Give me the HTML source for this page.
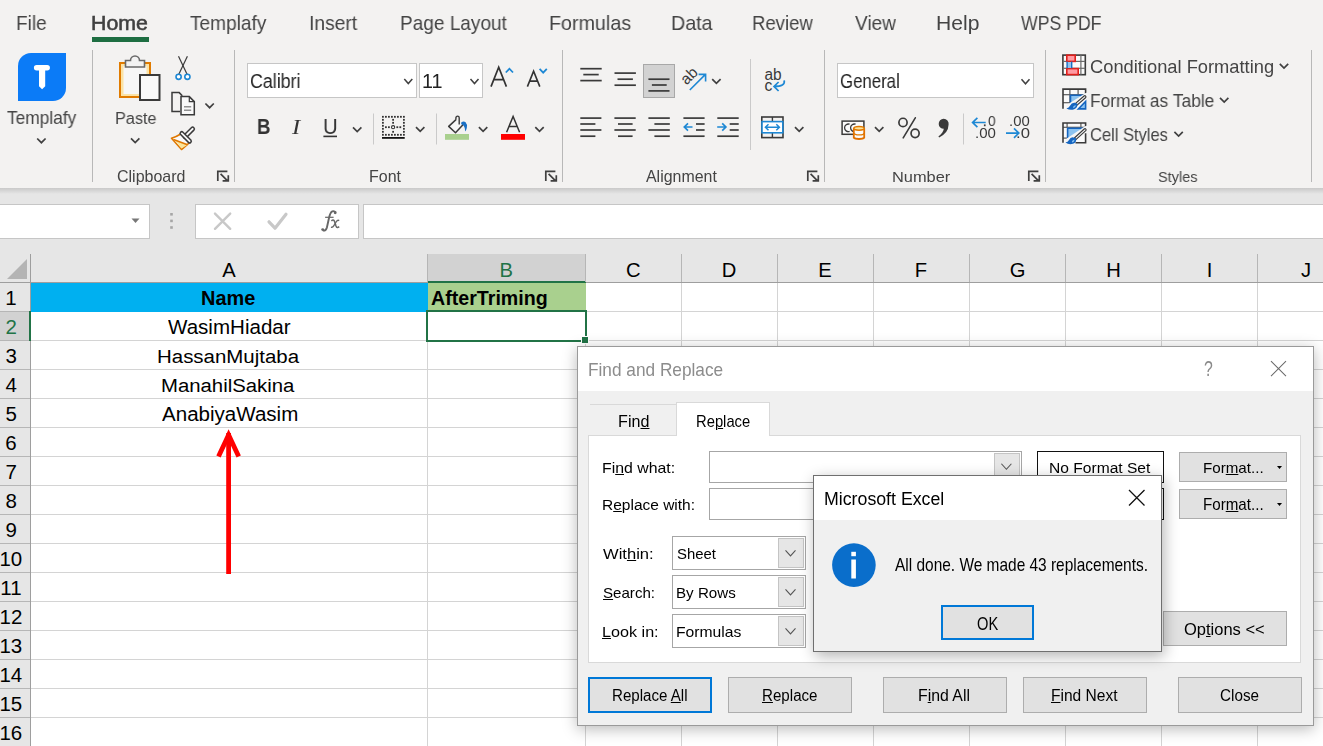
<!DOCTYPE html>
<html><head><meta charset="utf-8"><style>
html,body{margin:0;padding:0}
body{width:1323px;height:746px;overflow:hidden;position:relative;background:#e6e6e6;font-family:"Liberation Sans",sans-serif}
.t{position:absolute;line-height:1;white-space:pre;transform-origin:0 0}
.g{will-change:transform}
.t u{text-decoration:underline;text-decoration-thickness:1px;text-underline-offset:1px}
svg.L{position:absolute;left:0;top:0;width:1323px;height:746px;overflow:visible}
</style></head><body>
<div style="position:absolute;left:0px;top:0px;width:1323px;height:188px;background:#f3f2f1"></div><div style="position:absolute;left:92px;top:37px;width:57px;height:5px;background:#1e6e42"></div><div style="position:absolute;left:0px;top:188px;width:1323px;height:6px;background:linear-gradient(#c9c9c9,#e6e6e6)"></div><div style="position:absolute;left:92px;top:50px;width:1px;height:132px;background:#b8b8b8"></div><div style="position:absolute;left:234px;top:50px;width:1px;height:132px;background:#b8b8b8"></div><div style="position:absolute;left:562px;top:50px;width:1px;height:132px;background:#b8b8b8"></div><div style="position:absolute;left:824px;top:50px;width:1px;height:132px;background:#b8b8b8"></div><div style="position:absolute;left:1045px;top:50px;width:1px;height:132px;background:#b8b8b8"></div><div style="position:absolute;left:1311px;top:50px;width:1px;height:132px;background:#b8b8b8"></div><div style="position:absolute;left:0px;top:204px;width:150px;height:35px;background:#fff;border:1px solid #c6c6c6;border-left:none;box-sizing:border-box"></div><div style="position:absolute;left:195px;top:204px;width:164px;height:35px;background:#fff;border:1px solid #c6c6c6;box-sizing:border-box"></div><div style="position:absolute;left:363px;top:204px;width:960px;height:35px;background:#fff;border:1px solid #c6c6c6;border-right:none;box-sizing:border-box"></div><div style="position:absolute;left:31px;top:283px;width:1292px;height:463px;background:#fff"></div><div style="position:absolute;left:31px;top:311px;width:1292px;height:1px;background:#d4d4d4"></div><div style="position:absolute;left:31px;top:340px;width:1292px;height:1px;background:#d4d4d4"></div><div style="position:absolute;left:31px;top:369px;width:1292px;height:1px;background:#d4d4d4"></div><div style="position:absolute;left:31px;top:398px;width:1292px;height:1px;background:#d4d4d4"></div><div style="position:absolute;left:31px;top:427px;width:1292px;height:1px;background:#d4d4d4"></div><div style="position:absolute;left:31px;top:456px;width:1292px;height:1px;background:#d4d4d4"></div><div style="position:absolute;left:31px;top:485px;width:1292px;height:1px;background:#d4d4d4"></div><div style="position:absolute;left:31px;top:514px;width:1292px;height:1px;background:#d4d4d4"></div><div style="position:absolute;left:31px;top:543px;width:1292px;height:1px;background:#d4d4d4"></div><div style="position:absolute;left:31px;top:572px;width:1292px;height:1px;background:#d4d4d4"></div><div style="position:absolute;left:31px;top:601px;width:1292px;height:1px;background:#d4d4d4"></div><div style="position:absolute;left:31px;top:630px;width:1292px;height:1px;background:#d4d4d4"></div><div style="position:absolute;left:31px;top:659px;width:1292px;height:1px;background:#d4d4d4"></div><div style="position:absolute;left:31px;top:688px;width:1292px;height:1px;background:#d4d4d4"></div><div style="position:absolute;left:31px;top:717px;width:1292px;height:1px;background:#d4d4d4"></div><div style="position:absolute;left:31px;top:746px;width:1292px;height:1px;background:#d4d4d4"></div><div style="position:absolute;left:427px;top:283px;width:1px;height:463px;background:#d4d4d4"></div><div style="position:absolute;left:585px;top:283px;width:1px;height:463px;background:#d4d4d4"></div><div style="position:absolute;left:681px;top:283px;width:1px;height:463px;background:#d4d4d4"></div><div style="position:absolute;left:777px;top:283px;width:1px;height:463px;background:#d4d4d4"></div><div style="position:absolute;left:873px;top:283px;width:1px;height:463px;background:#d4d4d4"></div><div style="position:absolute;left:969px;top:283px;width:1px;height:463px;background:#d4d4d4"></div><div style="position:absolute;left:1065px;top:283px;width:1px;height:463px;background:#d4d4d4"></div><div style="position:absolute;left:1161px;top:283px;width:1px;height:463px;background:#d4d4d4"></div><div style="position:absolute;left:1257px;top:283px;width:1px;height:463px;background:#d4d4d4"></div><div style="position:absolute;left:428px;top:254px;width:157px;height:28px;background:#d2d2d2"></div><div style="position:absolute;left:0px;top:282px;width:1323px;height:1px;background:#9e9e9e"></div><div style="position:absolute;left:428px;top:281px;width:158px;height:2px;background:#217346"></div><div style="position:absolute;left:30px;top:254px;width:1px;height:28px;background:#b6b6b6"></div><div style="position:absolute;left:427px;top:254px;width:1px;height:28px;background:#b6b6b6"></div><div style="position:absolute;left:585px;top:254px;width:1px;height:28px;background:#b6b6b6"></div><div style="position:absolute;left:681px;top:254px;width:1px;height:28px;background:#b6b6b6"></div><div style="position:absolute;left:777px;top:254px;width:1px;height:28px;background:#b6b6b6"></div><div style="position:absolute;left:873px;top:254px;width:1px;height:28px;background:#b6b6b6"></div><div style="position:absolute;left:969px;top:254px;width:1px;height:28px;background:#b6b6b6"></div><div style="position:absolute;left:1065px;top:254px;width:1px;height:28px;background:#b6b6b6"></div><div style="position:absolute;left:1161px;top:254px;width:1px;height:28px;background:#b6b6b6"></div><div style="position:absolute;left:1257px;top:254px;width:1px;height:28px;background:#b6b6b6"></div><div style="position:absolute;left:30px;top:254px;width:1px;height:492px;background:#9e9e9e"></div><div style="position:absolute;left:0px;top:312px;width:29px;height:28px;background:#d2d2d2"></div><div style="position:absolute;left:0px;top:311px;width:30px;height:1px;background:#b6b6b6"></div><div style="position:absolute;left:0px;top:340px;width:30px;height:1px;background:#b6b6b6"></div><div style="position:absolute;left:0px;top:369px;width:30px;height:1px;background:#b6b6b6"></div><div style="position:absolute;left:0px;top:398px;width:30px;height:1px;background:#b6b6b6"></div><div style="position:absolute;left:0px;top:427px;width:30px;height:1px;background:#b6b6b6"></div><div style="position:absolute;left:0px;top:456px;width:30px;height:1px;background:#b6b6b6"></div><div style="position:absolute;left:0px;top:485px;width:30px;height:1px;background:#b6b6b6"></div><div style="position:absolute;left:0px;top:514px;width:30px;height:1px;background:#b6b6b6"></div><div style="position:absolute;left:0px;top:543px;width:30px;height:1px;background:#b6b6b6"></div><div style="position:absolute;left:0px;top:572px;width:30px;height:1px;background:#b6b6b6"></div><div style="position:absolute;left:0px;top:601px;width:30px;height:1px;background:#b6b6b6"></div><div style="position:absolute;left:0px;top:630px;width:30px;height:1px;background:#b6b6b6"></div><div style="position:absolute;left:0px;top:659px;width:30px;height:1px;background:#b6b6b6"></div><div style="position:absolute;left:0px;top:688px;width:30px;height:1px;background:#b6b6b6"></div><div style="position:absolute;left:0px;top:717px;width:30px;height:1px;background:#b6b6b6"></div><div style="position:absolute;left:0px;top:746px;width:30px;height:1px;background:#b6b6b6"></div><div style="position:absolute;left:29px;top:311px;width:2px;height:30px;background:#217346"></div><div style="position:absolute;left:31px;top:283px;width:397px;height:29px;background:#00b0f0"></div><div style="position:absolute;left:428px;top:283px;width:158px;height:28px;background:#a9d08e"></div><div style="position:absolute;left:426px;top:310px;width:161px;height:32px;border:2px solid #217346;box-sizing:border-box"></div><div style="position:absolute;left:582px;top:337px;width:6px;height:6px;background:#217346;outline:1px solid #fff"></div><div style="position:absolute;left:247px;top:63px;width:170px;height:35px;background:#fff;border:1px solid #c6c6c6;box-sizing:border-box"></div><div style="position:absolute;left:419px;top:63px;width:64px;height:35px;background:#fff;border:1px solid #c6c6c6;box-sizing:border-box"></div><div style="position:absolute;left:837px;top:63px;width:197px;height:35px;background:#fff;border:1px solid #c6c6c6;box-sizing:border-box"></div><div style="position:absolute;left:643px;top:64px;width:32px;height:34px;background:#d2d2d2;border:1px solid #a8a8a8;box-sizing:border-box"></div>
<svg class="L" viewBox="0 0 1323 746"><path d="M7 279 L27 259 L27 279 Z" fill="#b4b4b4"/><path d="M228.6 433 L228.6 574" stroke="#f00" stroke-width="4.8"/><path d="M218.5 456.5 L228.6 435 L238.7 456.5" stroke="#f00" stroke-width="4.8" fill="none" stroke-linejoin="miter" stroke-miterlimit="10"/><path d="M404.3 78.9 L408.3 83.5 L412.3 78.9" stroke="#404040" stroke-width="1.5" fill="none"/><path d="M470.5 78.9 L474.5 83.5 L478.5 78.9" stroke="#404040" stroke-width="1.5" fill="none"/><path d="M1021.5 79.2 L1025.5 83.8 L1029.5 79.2" stroke="#404040" stroke-width="1.5" fill="none"/><path d="M37.199999999999996 138.5 L41.4 142.7 L45.6 138.5" stroke="#404040" stroke-width="1.7" fill="none"/><path d="M131.0 138.3 L135.2 142.5 L139.39999999999998 138.3" stroke="#404040" stroke-width="1.7" fill="none"/><path d="M205.4 103.5 L209.6 107.69999999999999 L213.79999999999998 103.5" stroke="#404040" stroke-width="1.7" fill="none"/><path d="M353.0 127.30000000000001 L357.2 131.5 L361.4 127.30000000000001" stroke="#404040" stroke-width="1.7" fill="none"/><path d="M416.0 127.1 L420.2 131.29999999999998 L424.4 127.1" stroke="#404040" stroke-width="1.7" fill="none"/><path d="M478.90000000000003 127.1 L483.1 131.29999999999998 L487.3 127.1" stroke="#404040" stroke-width="1.7" fill="none"/><path d="M535.3 127.1 L539.5 131.29999999999998 L543.7 127.1" stroke="#404040" stroke-width="1.7" fill="none"/><path d="M712.1999999999999 79.10000000000001 L716.4 83.3 L720.6 79.10000000000001" stroke="#404040" stroke-width="1.7" fill="none"/><path d="M795.0 127.20000000000002 L799.2 131.4 L803.4000000000001 127.20000000000002" stroke="#404040" stroke-width="1.7" fill="none"/><path d="M875.0 127.20000000000002 L879.2 131.4 L883.4000000000001 127.20000000000002" stroke="#404040" stroke-width="1.7" fill="none"/><path d="M1279.8 63.9 L1284 68.1 L1288.2 63.9" stroke="#404040" stroke-width="1.7" fill="none"/><path d="M1220.0 97.9 L1224.2 102.1 L1228.4 97.9" stroke="#404040" stroke-width="1.7" fill="none"/><path d="M1174.3999999999999 131.9 L1178.6 136.1 L1182.8 131.9" stroke="#404040" stroke-width="1.7" fill="none"/><path d="M217.8 181 V171.3 H227.4" stroke="#404040" stroke-width="1.7" fill="none"/><path d="M220.6 173.8 L227.6 180.8 M222.6 180.9 H228.3 V175.2" stroke="#404040" stroke-width="1.7" fill="none"/><path d="M545.8 181 V171.3 H555.4" stroke="#404040" stroke-width="1.7" fill="none"/><path d="M548.6 173.8 L555.6 180.8 M550.6 180.9 H556.3 V175.2" stroke="#404040" stroke-width="1.7" fill="none"/><path d="M807.8 181 V171.3 H817.4" stroke="#404040" stroke-width="1.7" fill="none"/><path d="M810.6 173.8 L817.6 180.8 M812.6 180.9 H818.3 V175.2" stroke="#404040" stroke-width="1.7" fill="none"/><path d="M1028.8 181 V171.3 H1038.4" stroke="#404040" stroke-width="1.7" fill="none"/><path d="M1031.6 173.8 L1038.6 180.8 M1033.6 180.9 H1039.3 V175.2" stroke="#404040" stroke-width="1.7" fill="none"/><path d="M131.5 218.5 L139.5 218.5 L135.5 223 Z" fill="#777"/><rect x="170.2" y="213" width="2.6" height="2.6" fill="#a6a6a6"/><rect x="170.2" y="219.6" width="2.6" height="2.6" fill="#a6a6a6"/><rect x="170.2" y="226.2" width="2.6" height="2.6" fill="#a6a6a6"/><path d="M215 213.6 L230.2 228.8 M230.2 213.6 L215 228.8" stroke="#c8c8c8" stroke-width="2.4" stroke-linecap="round"/><path d="M269 221.8 L275 228.2 L286 214.2" stroke="#c8c8c8" stroke-width="3.2" fill="none" stroke-linecap="round" stroke-linejoin="round"/><path d="M335.6 212.6 Q334.4 210.6 332.3 211.3 Q330.2 212.2 329 218 L326.9 227.4 Q325.9 231 322.9 230.6" stroke="#676767" stroke-width="1.9" fill="none"/><circle cx="335.2" cy="212.8" r="1.45" fill="#676767"/><circle cx="322.7" cy="229.6" r="1.45" fill="#676767"/><path d="M325.1 217.3 H333.6" stroke="#676767" stroke-width="1.2"/><path d="M331.4 221 Q333.4 218.8 334.6 221.6 L336 225.9 Q337 228.7 339.2 226.6" stroke="#676767" stroke-width="1.5" fill="none"/><path d="M339.2 220.6 Q337.6 219.6 336.1 222 L333.7 225.9 Q332.6 227.7 331 227.1" stroke="#676767" stroke-width="1.4" fill="none"/><path d="M31 53 H66 V88 A13 13 0 0 1 53 101 H18 V66 A13 13 0 0 1 31 53 Z" fill="#0b7bf7"/><path d="M36.6 67.8 L47.2 67.8" stroke="#fff" stroke-width="5.4" stroke-linecap="round" fill="none"/><path d="M39 67 V86.3 L42.1 89.2 L45.2 86.3 V67 Z" fill="#fff"/><rect x="120" y="63" width="30" height="34" fill="#fbe3a6" stroke="#e07b00" stroke-width="2"/><rect x="123.5" y="66" width="23" height="28" fill="#f7f7f7"/><path d="M125.5 67 V60.5 H130.5 A4.5 4.5 0 0 1 139.5 60.5 H144.5 V67 Z" fill="#f3f3f3" stroke="#6a6a6a" stroke-width="1.6"/><rect x="140" y="75" width="19.5" height="25" fill="#f9f9f9" stroke="#3a3a3a" stroke-width="2"/><path d="M178.5 56.3 L187.2 74.5" stroke="#3a3a3a" stroke-width="1.2" stroke-linecap="butt" fill="none"/><path d="M187.4 56.3 L178.7 74.5" stroke="#3a3a3a" stroke-width="1.2" stroke-linecap="butt" fill="none"/><circle cx="178.6" cy="76.8" r="2.6" fill="#fff" stroke="#1e88d4" stroke-width="1.6"/><circle cx="187.4" cy="76.8" r="2.6" fill="#fff" stroke="#1e88d4" stroke-width="1.6"/><path d="M180 111.5 H172 V92.6 H179.2 L182.3 95.7" stroke="#3a3a3a" stroke-width="1.5" fill="none"/><path d="M181 96.6 H189.3 L194.3 101.6 V114.8 H181 Z" fill="#f9f9f9" stroke="#3a3a3a" stroke-width="1.5"/><path d="M189.3 96.6 V101.6 H194.3" stroke="#3a3a3a" stroke-width="1.2" fill="none"/><path d="M184 106.8 L191.2 106.8" stroke="#777" stroke-width="1.2" stroke-linecap="butt" fill="none"/><path d="M184 110.2 L191.2 110.2" stroke="#777" stroke-width="1.2" stroke-linecap="butt" fill="none"/><path d="M181.2 133.8 Q176 137 171.5 138.3 L181.5 149.5 Q186 146 189.8 142.2 Z" fill="#fafafa" stroke="#e07800" stroke-width="1.6" stroke-linejoin="round"/><path d="M174.5 140 L187.5 144.8 L181.5 148.6 Z" fill="#fbe49a"/><path d="M173.5 139.5 L187.5 144.8" stroke="#e07800" stroke-width="1.5" stroke-linecap="butt" fill="none"/><path d="M185 136.5 L192.6 128.9" stroke="#3a3a3a" stroke-width="5.0" stroke-linecap="round" fill="none"/><path d="M185 136.5 L192.6 128.9" stroke="#f7f7f7" stroke-width="2.0" stroke-linecap="round" fill="none"/><path d="M181.8 133.4 L189.6 141.2" stroke="#3a3a3a" stroke-width="4.8" stroke-linecap="round" fill="none"/><path d="M181.8 133.4 L189.6 141.2" stroke="#f7f7f7" stroke-width="1.8" stroke-linecap="round" fill="none"/><path d="M491 86.6 L498.7 67.2 L506.4 86.6 M493.8 79.6 H503.6" stroke="#333" stroke-width="1.7" fill="none"/><path d="M505.8 72.5 L509.4 68.7 L513 72.5" stroke="#1e88d4" stroke-width="1.8" fill="none"/><path d="M527.4 86.6 L533.6 71.2 L539.8 86.6 M529.6 81.1 H537.6" stroke="#333" stroke-width="1.6" fill="none"/><path d="M539.6 68.9 L543.2 72.7 L546.8 68.9" stroke="#1e88d4" stroke-width="1.8" fill="none"/><rect x="323.4" y="135.6" width="13.6" height="1.6" fill="#333"/><path d="M373.5 113.5 L373.5 144.5" stroke="#cacaca" stroke-width="1" stroke-linecap="butt" fill="none"/><path d="M436.5 113.5 L436.5 144.5" stroke="#cacaca" stroke-width="1" stroke-linecap="butt" fill="none"/><g fill="#333"><rect x="382.0" y="115.9" width="1.8" height="1.8"/><rect x="382.0" y="133.9" width="1.8" height="1.8"/><rect x="385.0" y="115.9" width="1.8" height="1.8"/><rect x="385.0" y="133.9" width="1.8" height="1.8"/><rect x="388.0" y="115.9" width="1.8" height="1.8"/><rect x="388.0" y="133.9" width="1.8" height="1.8"/><rect x="391.0" y="115.9" width="1.8" height="1.8"/><rect x="391.0" y="133.9" width="1.8" height="1.8"/><rect x="394.0" y="115.9" width="1.8" height="1.8"/><rect x="394.0" y="133.9" width="1.8" height="1.8"/><rect x="397.0" y="115.9" width="1.8" height="1.8"/><rect x="397.0" y="133.9" width="1.8" height="1.8"/><rect x="400.0" y="115.9" width="1.8" height="1.8"/><rect x="400.0" y="133.9" width="1.8" height="1.8"/><rect x="403.0" y="115.9" width="1.8" height="1.8"/><rect x="403.0" y="133.9" width="1.8" height="1.8"/><rect x="382.0" y="118.9" width="1.8" height="1.8"/><rect x="403.0" y="118.9" width="1.8" height="1.8"/><rect x="382.0" y="121.9" width="1.8" height="1.8"/><rect x="403.0" y="121.9" width="1.8" height="1.8"/><rect x="382.0" y="124.9" width="1.8" height="1.8"/><rect x="403.0" y="124.9" width="1.8" height="1.8"/><rect x="382.0" y="127.9" width="1.8" height="1.8"/><rect x="403.0" y="127.9" width="1.8" height="1.8"/><rect x="382.0" y="130.9" width="1.8" height="1.8"/><rect x="403.0" y="130.9" width="1.8" height="1.8"/><rect x="392.2" y="118.9" width="1.8" height="1.8"/><rect x="392.2" y="121.9" width="1.8" height="1.8"/><rect x="392.2" y="130.9" width="1.8" height="1.8"/><rect x="385.0" y="126.3" width="1.8" height="1.8"/><rect x="388.0" y="126.3" width="1.8" height="1.8"/><rect x="396.4" y="126.3" width="1.8" height="1.8"/><rect x="399.4" y="126.3" width="1.8" height="1.8"/></g><circle cx="393.1" cy="127.2" r="1.6" fill="#fafafa" stroke="#333" stroke-width="1.1"/><rect x="382" y="137" width="22.7" height="1.8" fill="#111"/><path d="M456 119.6 L448.7 126.4 L455.5 132.8 L463.2 124.6 Z" fill="#f7f7f7" stroke="none"/><path d="M456 119.6 L448.7 126.4 L455.5 132.8 L463.2 124.4" stroke="#3a3a3a" stroke-width="1.5" stroke-linejoin="round" fill="none"/><path d="M455.9 119.8 V117.8 A1.65 1.65 0 0 1 459.2 117.8 V124.6" stroke="#3a3a3a" stroke-width="1.4" fill="none"/><path d="M461.2 122.6 Q463.5 120.6 465.6 122.2 Q467.6 124.2 466.8 128 Q466.2 130.4 465.2 131.6 Q465 127.4 463.6 125.6 Q462.6 124.4 461.2 124.2 Z" fill="#1a6fc4"/><rect x="445" y="134" width="24" height="5.8" fill="#a9d08e"/><path d="M506.6 132.2 L513.1 116.4 L519.6 132.2 M508.8 126.4 H517.4" stroke="#333" stroke-width="1.5" fill="none"/><rect x="501" y="134" width="24" height="5.8" fill="#f00"/><path d="M580.3 68.7 L601.7 68.7" stroke="#3a3a3a" stroke-width="1.7" stroke-linecap="butt" fill="none"/><path d="M583.3 74.6 L598.7 74.6" stroke="#3a3a3a" stroke-width="1.7" stroke-linecap="butt" fill="none"/><path d="M580.3 80.6 L601.7 80.6" stroke="#3a3a3a" stroke-width="1.7" stroke-linecap="butt" fill="none"/><path d="M614.5 73.1 L635.9 73.1" stroke="#3a3a3a" stroke-width="1.7" stroke-linecap="butt" fill="none"/><path d="M617.5 79.2 L632.9 79.2" stroke="#3a3a3a" stroke-width="1.7" stroke-linecap="butt" fill="none"/><path d="M614.5 85.2 L635.9 85.2" stroke="#3a3a3a" stroke-width="1.7" stroke-linecap="butt" fill="none"/><path d="M648.4 79.2 L669.5 79.2" stroke="#3a3a3a" stroke-width="1.7" stroke-linecap="butt" fill="none"/><path d="M651.9 85.0 L666.7 85.0" stroke="#3a3a3a" stroke-width="1.7" stroke-linecap="butt" fill="none"/><path d="M648.4 90.9 L669.5 90.9" stroke="#3a3a3a" stroke-width="1.7" stroke-linecap="butt" fill="none"/><path d="M580.3 118.1 L601.4 118.1" stroke="#3a3a3a" stroke-width="1.7" stroke-linecap="butt" fill="none"/><path d="M580.3 124.0 L595.4 124.0" stroke="#3a3a3a" stroke-width="1.7" stroke-linecap="butt" fill="none"/><path d="M580.3 130.0 L601.4 130.0" stroke="#3a3a3a" stroke-width="1.7" stroke-linecap="butt" fill="none"/><path d="M580.3 136.2 L595.4 136.2" stroke="#3a3a3a" stroke-width="1.7" stroke-linecap="butt" fill="none"/><path d="M614.4 118.1 L635.7 118.1" stroke="#3a3a3a" stroke-width="1.7" stroke-linecap="butt" fill="none"/><path d="M618 124.0 L632.6 124.0" stroke="#3a3a3a" stroke-width="1.7" stroke-linecap="butt" fill="none"/><path d="M614.4 130.0 L635.7 130.0" stroke="#3a3a3a" stroke-width="1.7" stroke-linecap="butt" fill="none"/><path d="M618 136.2 L632.6 136.2" stroke="#3a3a3a" stroke-width="1.7" stroke-linecap="butt" fill="none"/><path d="M648.4 118.1 L669.8 118.1" stroke="#3a3a3a" stroke-width="1.7" stroke-linecap="butt" fill="none"/><path d="M654.4 124.0 L669.8 124.0" stroke="#3a3a3a" stroke-width="1.7" stroke-linecap="butt" fill="none"/><path d="M648.4 130.0 L669.8 130.0" stroke="#3a3a3a" stroke-width="1.7" stroke-linecap="butt" fill="none"/><path d="M654.4 136.2 L669.8 136.2" stroke="#3a3a3a" stroke-width="1.7" stroke-linecap="butt" fill="none"/><path d="M683.4 118.1 L704.6 118.1" stroke="#3a3a3a" stroke-width="1.7" stroke-linecap="butt" fill="none"/><path d="M696 124.0 L704.6 124.0" stroke="#3a3a3a" stroke-width="1.7" stroke-linecap="butt" fill="none"/><path d="M696 130.0 L704.6 130.0" stroke="#3a3a3a" stroke-width="1.7" stroke-linecap="butt" fill="none"/><path d="M683.4 136.2 L704.6 136.2" stroke="#3a3a3a" stroke-width="1.7" stroke-linecap="butt" fill="none"/><path d="M717.3 118.1 L738.7 118.1" stroke="#3a3a3a" stroke-width="1.7" stroke-linecap="butt" fill="none"/><path d="M729.7 124.0 L738.7 124.0" stroke="#3a3a3a" stroke-width="1.7" stroke-linecap="butt" fill="none"/><path d="M729.7 130.0 L738.7 130.0" stroke="#3a3a3a" stroke-width="1.7" stroke-linecap="butt" fill="none"/><path d="M717.3 136.2 L738.7 136.2" stroke="#3a3a3a" stroke-width="1.7" stroke-linecap="butt" fill="none"/><path d="M692.5 127 H684.5 M688 123.4 L684.3 127 L688 130.6" stroke="#1e88d4" stroke-width="1.7" fill="none"/><path d="M717.2 127 H725.8 M722.2 123.4 L725.9 127 L722.2 130.6" stroke="#1e88d4" stroke-width="1.7" fill="none"/><text x="0" y="0" font-family="Liberation Sans" font-size="15.5" fill="#3a3a3a" transform="translate(686.6 85.6) rotate(-45)">ab</text><path d="M689.8 90 L705.2 74.6 M698.6 74.4 H705.6 V81.4" stroke="#1e88d4" stroke-width="1.6" fill="none"/><text x="764.4" y="79.6" font-family="Liberation Sans" font-size="15.6" fill="#3a3a3a" textLength="17.2" lengthAdjust="spacingAndGlyphs">ab</text><text x="764.4" y="90.6" font-family="Liberation Sans" font-size="15.6" fill="#3a3a3a">c</text><path d="M784.2 80.4 Q785.5 86.5 774 86.4 M778.6 82 L774 86.4 L778.6 91" stroke="#1e88d4" stroke-width="1.7" fill="none"/><rect x="761.8" y="117" width="21.2" height="20.6" fill="none" stroke="#3a3a3a" stroke-width="1.6"/><path d="M772.4 117 L772.4 121.5" stroke="#3a3a3a" stroke-width="1.4" stroke-linecap="butt" fill="none"/><path d="M772.4 133 L772.4 137.6" stroke="#3a3a3a" stroke-width="1.4" stroke-linecap="butt" fill="none"/><rect x="762" y="121.6" width="20.8" height="11.2" fill="#fff" stroke="#1e88d4" stroke-width="1.6"/><path d="M765.5 127.2 H779.3 M768.5 124.2 L765.4 127.2 L768.5 130.2 M776.3 124.2 L779.4 127.2 L776.3 130.2" stroke="#1e88d4" stroke-width="1.5" fill="none"/><path d="M750.5 59 L750.5 150" stroke="#cacaca" stroke-width="1" stroke-linecap="butt" fill="none"/><path d="M963.5 113.5 L963.5 144.5" stroke="#cacaca" stroke-width="1" stroke-linecap="butt" fill="none"/><rect x="842.1" y="121.1" width="21.8" height="13.2" fill="#fbfbfb" stroke="#3a3a3a" stroke-width="1.5"/><path d="M849.6 124.2 A3.8 3.8 0 1 0 849.6 131.4 M855.6 124.2 A3.8 3.8 0 1 0 855.6 131.4" stroke="#3a3a3a" stroke-width="1.3" fill="none"/><path d="M853.8 128.3 V137.6 A5.4 1.9 0 0 0 864.2 137.6 V128.3" fill="#fbfbfb" stroke="#e07000" stroke-width="1.8"/><ellipse cx="859" cy="128.3" rx="5.2" ry="1.9" fill="#fbe49a" stroke="#e07800" stroke-width="1.5"/><path d="M853.8 133 A5.2 1.9 0 0 0 864.2 133" stroke="#e07800" stroke-width="1.4" fill="none"/><ellipse cx="903" cy="122.45" rx="4.1" ry="4.2" fill="none" stroke="#3a3a3a" stroke-width="1.7"/><ellipse cx="915.1" cy="133.35" rx="4.05" ry="4.2" fill="none" stroke="#3a3a3a" stroke-width="1.7"/><path d="M903.2 137.8 L915.3 117.8" stroke="#3a3a3a" stroke-width="1.6" stroke-linecap="round" fill="none"/><path d="M943.6 118.8 A5 5 0 0 1 948.6 124.6 Q948.4 133.2 939.2 137.4 L938.4 136.4 Q943.5 132.5 943.8 128.8 A5 5 0 0 1 943.6 118.8 Z" fill="#3a3a3a"/><path d="M985.7 122.5 H972.8 M977.4 117.8 L972.6 122.5 L977.4 127.2" stroke="#1e88d4" stroke-width="1.7" fill="none"/><path d="M1006 133.1 H1018.6 M1014 128.4 L1018.8 133.1 L1014 137.8" stroke="#1e88d4" stroke-width="1.7" fill="none"/><rect x="1062.9" y="55.1" width="22.399999999999864" height="19.6" fill="#fafafa" stroke="#3a3a3a" stroke-width="1.6"/><path d="M1080.9 55.1 L1080.9 74.7" stroke="#6a6a6a" stroke-width="1.2" stroke-linecap="butt" fill="none"/><path d="M1062.9 61.4 L1085.3 61.4" stroke="#6a6a6a" stroke-width="1.2" stroke-linecap="butt" fill="none"/><path d="M1062.9 68.3 L1085.3 68.3" stroke="#6a6a6a" stroke-width="1.2" stroke-linecap="butt" fill="none"/><rect x="1066.8" y="55.2" width="8.4" height="6.2" fill="#ff9aa2" stroke="#e0201c" stroke-width="1.6"/><rect x="1066.8" y="68.6" width="11.4" height="6" fill="#ff9aa2" stroke="#e0201c" stroke-width="1.6"/><rect x="1067.1" y="62.1" width="4.6" height="5.8" fill="#8fc3ef"/><path d="M1067.1 61.6 L1067.1 68.2" stroke="#1a6fc4" stroke-width="1.4" stroke-linecap="butt" fill="none"/><path d="M1071.7 61.6 L1071.7 68.2" stroke="#1a6fc4" stroke-width="1.4" stroke-linecap="butt" fill="none"/><rect x="1063" y="89.1" width="22.6" height="19.7" fill="#fafafa"/><path d="M1069.9 89 L1069.9 108.8" stroke="#5a5a5a" stroke-width="1.2" stroke-linecap="butt" fill="none"/><path d="M1078.1 89 L1078.1 94.7" stroke="#5a5a5a" stroke-width="1.2" stroke-linecap="butt" fill="none"/><path d="M1063 94.7 L1085.6 94.7" stroke="#5a5a5a" stroke-width="1.2" stroke-linecap="butt" fill="none"/><path d="M1063 102.7 L1069.9 102.7" stroke="#5a5a5a" stroke-width="1.2" stroke-linecap="butt" fill="none"/><path d="M1063 108.8 V89.1 H1085.6 V93.8" stroke="#3a3a3a" stroke-width="1.6" fill="none"/><path d="M1070.5 105.5 V95.3 H1082.8 Z" fill="#8cc3f0" stroke="#1565c0" stroke-width="1.6" stroke-linejoin="miter"/><path d="M1085.6 101.5 V108.9 H1078.4 Z" fill="#8cc3f0" stroke="#1565c0" stroke-width="1.6"/><path d="M1086.3 95.60000000000001 L1068.4 106.9" stroke="#f6f6f6" stroke-width="5.2" stroke-linecap="round" fill="none"/><path d="M1084.8 96.9 L1076.6 104" stroke="#3a3a3a" stroke-width="3.4" stroke-linecap="round" fill="none"/><path d="M1084.8 96.9 L1076.6 104" stroke="#f7f7f7" stroke-width="1.1" stroke-linecap="round" fill="none"/><path d="M1077.1999999999998 103.6 Q1078.1999999999998 107.6 1074.1999999999998 109.2 Q1070.1999999999998 110.6 1066.4 108.4 Q1069.0 107.80000000000001 1070.0 105.80000000000001 Q1071.6000000000001 102.4 1074.8 102.8 Z" fill="#1565c0"/><path d="M1075.6 105 Q1076.0 107.4 1073.1999999999998 108 Q1072.6 106.2 1075.6 105 Z" fill="#8cc3f0"/><rect x="1063" y="123" width="22.6" height="19.8" fill="#fafafa"/><path d="M1067.1 123 L1067.1 127.3" stroke="#5a5a5a" stroke-width="1.2" stroke-linecap="butt" fill="none"/><path d="M1080.9 123 L1080.9 127.3" stroke="#5a5a5a" stroke-width="1.2" stroke-linecap="butt" fill="none"/><path d="M1063 127.3 L1085.6 127.3" stroke="#5a5a5a" stroke-width="1.2" stroke-linecap="butt" fill="none"/><path d="M1063 138.1 L1067 138.1" stroke="#5a5a5a" stroke-width="1.2" stroke-linecap="butt" fill="none"/><path d="M1067.1 138.1 L1067.1 142.8" stroke="#5a5a5a" stroke-width="1.2" stroke-linecap="butt" fill="none"/><path d="M1063 142.8 V123 H1085.6 V127.5 M1085.6 133.2 V142.8 H1075.5" stroke="#3a3a3a" stroke-width="1.6" fill="none"/><path d="M1067.6 138.2 V128.2 H1082.6 L1072.6 138.2 Z" fill="#8cc3f0" stroke="#1565c0" stroke-width="1.6"/><path d="M1086.5 128.5 L1067.4 141.1" stroke="#f6f6f6" stroke-width="5.2" stroke-linecap="round" fill="none"/><path d="M1085 129.8 L1075.4 138.6" stroke="#3a3a3a" stroke-width="3.4" stroke-linecap="round" fill="none"/><path d="M1085 129.8 L1075.4 138.6" stroke="#f7f7f7" stroke-width="1.1" stroke-linecap="round" fill="none"/><path d="M1076.0 138.2 Q1077.0 142.2 1073.0 143.79999999999998 Q1069.0 145.2 1065.4 142.6 Q1068.0 142.0 1069.0 140.0 Q1070.6000000000001 136.6 1073.6000000000001 137.4 Z" fill="#1565c0"/><path d="M1074.4 139.6 Q1074.8000000000002 142.0 1072.0 142.6 Q1071.4 140.79999999999998 1074.4 139.6 Z" fill="#8cc3f0"/><rect x="983.9" y="124.4" width="1.7" height="1.8" fill="#3a3a3a"/></svg>
<div class="t g" style="left:15.68px;top:12.90px;font-size:20.64px;color:#444;font-weight:normal;transform:scaleX(0.9235);">File</div>
<div class="t g" style="left:90.89px;top:12.90px;font-size:20.64px;color:#404040;font-weight:normal;transform:scaleX(1.0331);-webkit-text-stroke:0.55px #404040;">Home</div>
<div class="t g" style="left:189.62px;top:12.90px;font-size:20.64px;color:#444;font-weight:normal;transform:scaleX(0.9248);">Templafy</div>
<div class="t g" style="left:308.77px;top:12.90px;font-size:20.64px;color:#444;font-weight:normal;transform:scaleX(0.9336);">Insert</div>
<div class="t g" style="left:400.48px;top:12.90px;font-size:20.64px;color:#444;font-weight:normal;transform:scaleX(0.9230);">Page Layout</div>
<div class="t g" style="left:549.42px;top:12.90px;font-size:20.64px;color:#444;font-weight:normal;transform:scaleX(0.9553);">Formulas</div>
<div class="t g" style="left:671.02px;top:12.90px;font-size:20.64px;color:#444;font-weight:normal;transform:scaleX(0.9542);">Data</div>
<div class="t g" style="left:752.02px;top:12.90px;font-size:20.64px;color:#444;font-weight:normal;transform:scaleX(0.8990);">Review</div>
<div class="t g" style="left:855.00px;top:12.90px;font-size:20.64px;color:#444;font-weight:normal;transform:scaleX(0.9208);">View</div>
<div class="t g" style="left:936.31px;top:12.90px;font-size:20.64px;color:#444;font-weight:normal;transform:scaleX(1.0237);">Help</div>
<div class="t g" style="left:1020.50px;top:12.90px;font-size:20.64px;color:#444;font-weight:normal;transform:scaleX(0.8566);">WPS PDF</div>
<div class="t g" style="left:6.65px;top:108.60px;font-size:18.02px;color:#444;font-weight:normal;transform:scaleX(0.9617);">Templafy</div>
<div class="t g" style="left:115.00px;top:109.80px;font-size:17.3px;color:#444;font-weight:normal;transform:scaleX(0.9401);">Paste</div>
<div class="t g" style="left:116.80px;top:168.50px;font-size:15.99px;color:#444;font-weight:normal;">Clipboard</div>
<div class="t g" style="left:369.34px;top:168.80px;font-size:15.99px;color:#444;font-weight:normal;transform:scaleX(0.9886);">Font</div>
<div class="t g" style="left:645.70px;top:168.80px;font-size:15.7px;color:#444;font-weight:normal;transform:scaleX(1.0151);">Alignment</div>
<div class="t g" style="left:892.49px;top:168.70px;font-size:15.55px;color:#444;font-weight:normal;transform:scaleX(1.0546);">Number</div>
<div class="t g" style="left:1158.12px;top:168.60px;font-size:15.41px;color:#444;font-weight:normal;transform:scaleX(0.9417);">Styles</div>
<div class="t g" style="left:249.61px;top:72.30px;font-size:19.77px;color:#222;font-weight:normal;transform:scaleX(0.9013);">Calibri</div>
<div class="t g" style="left:421.63px;top:72.30px;font-size:19.77px;color:#222;font-weight:normal;transform:scaleX(0.9876);">11</div>
<div class="t g" style="left:839.66px;top:72.20px;font-size:19.48px;color:#222;font-weight:normal;transform:scaleX(0.8627);">General</div>
<div class="t g" style="left:1089.79px;top:57.50px;font-size:18.31px;color:#444;font-weight:normal;">Conditional Formatting</div>
<div class="t g" style="left:1089.61px;top:92.00px;font-size:18.9px;color:#444;font-weight:normal;transform:scaleX(0.9204);">Format as Table</div>
<div class="t g" style="left:1089.88px;top:125.50px;font-size:18.6px;color:#444;font-weight:normal;transform:scaleX(0.8869);">Cell Styles</div>
<div class="t" style="left:222.23px;top:260.10px;font-size:20.2px;color:#000;font-weight:normal;">A</div>
<div class="t" style="left:499.43px;top:260.10px;font-size:20.2px;color:#217346;font-weight:normal;">B</div>
<div class="t" style="left:626.03px;top:260.10px;font-size:20.2px;color:#000;font-weight:normal;">C</div>
<div class="t" style="left:721.82px;top:260.10px;font-size:20.2px;color:#000;font-weight:normal;">D</div>
<div class="t" style="left:818.33px;top:260.10px;font-size:20.2px;color:#000;font-weight:normal;">E</div>
<div class="t" style="left:914.83px;top:260.10px;font-size:20.2px;color:#000;font-weight:normal;">F</div>
<div class="t" style="left:1009.82px;top:260.10px;font-size:20.2px;color:#000;font-weight:normal;">G</div>
<div class="t" style="left:1106.13px;top:260.10px;font-size:20.2px;color:#000;font-weight:normal;">H</div>
<div class="t" style="left:1206.67px;top:260.10px;font-size:20.2px;color:#000;font-weight:normal;">I</div>
<div class="t" style="left:1301.06px;top:260.10px;font-size:20.2px;color:#000;font-weight:normal;">J</div>
<div class="t" style="left:5.26px;top:288.20px;font-size:20.49px;color:#000;font-weight:normal;">1</div>
<div class="t" style="left:5.46px;top:317.20px;font-size:20.49px;color:#217346;font-weight:normal;">2</div>
<div class="t" style="left:5.57px;top:346.20px;font-size:20.49px;color:#000;font-weight:normal;">3</div>
<div class="t" style="left:5.57px;top:375.20px;font-size:20.49px;color:#000;font-weight:normal;">4</div>
<div class="t" style="left:5.46px;top:404.20px;font-size:20.49px;color:#000;font-weight:normal;">5</div>
<div class="t" style="left:5.36px;top:433.20px;font-size:20.49px;color:#000;font-weight:normal;">6</div>
<div class="t" style="left:5.46px;top:462.20px;font-size:20.49px;color:#000;font-weight:normal;">7</div>
<div class="t" style="left:5.46px;top:491.20px;font-size:20.49px;color:#000;font-weight:normal;">8</div>
<div class="t" style="left:5.57px;top:520.20px;font-size:20.49px;color:#000;font-weight:normal;">9</div>
<div class="t" style="left:-0.54px;top:549.20px;font-size:20.49px;color:#000;font-weight:normal;">10</div>
<div class="t" style="left:0.32px;top:578.20px;font-size:20.49px;color:#000;font-weight:normal;">11</div>
<div class="t" style="left:-0.44px;top:607.20px;font-size:20.49px;color:#000;font-weight:normal;">12</div>
<div class="t" style="left:-0.54px;top:636.20px;font-size:20.49px;color:#000;font-weight:normal;">13</div>
<div class="t" style="left:-0.64px;top:665.20px;font-size:20.49px;color:#000;font-weight:normal;">14</div>
<div class="t" style="left:-0.54px;top:694.20px;font-size:20.49px;color:#000;font-weight:normal;">15</div>
<div class="t" style="left:-0.54px;top:723.20px;font-size:20.49px;color:#000;font-weight:normal;">16</div>
<div class="t" style="left:201.40px;top:288.80px;font-size:19.62px;color:#000;font-weight:bold;transform:scaleX(1.0165);">Name</div>
<div class="t" style="left:431.11px;top:288.80px;font-size:19.62px;color:#000;font-weight:bold;">AfterTriming</div>
<div class="t" style="left:167.90px;top:316.20px;font-size:21.08px;color:#000;font-weight:normal;transform:scaleX(0.9757);">WasimHiadar</div>
<div class="t" style="left:157.36px;top:346.70px;font-size:19.19px;color:#000;font-weight:normal;transform:scaleX(1.0654);">HassanMujtaba</div>
<div class="t" style="left:161.37px;top:376.00px;font-size:19.19px;color:#000;font-weight:normal;transform:scaleX(1.0593);">ManahilSakina</div>
<div class="t" style="left:161.50px;top:405.00px;font-size:19.91px;color:#000;font-weight:normal;transform:scaleX(1.0322);">AnabiyaWasim</div>
<div class="t g" style="left:256.59px;top:116.00px;font-size:21.95px;color:#333;font-weight:bold;transform:scaleX(0.8450);">B</div>
<div class="t g" style="left:292.45px;top:116.00px;font-size:21.95px;color:#333;font-weight:normal;transform:scaleX(1.1214);font-style:italic;font-family:'Liberation Serif', serif;">I</div>
<div class="t g" style="left:322.78px;top:116.00px;font-size:21.95px;color:#333;font-weight:normal;transform:scaleX(0.9269);">U</div>
<div class="t g" style="left:987.89px;top:114.10px;font-size:14.54px;color:#3a3a3a;font-weight:normal;transform:scaleX(0.9404);">0</div>
<div class="t g" style="left:974.65px;top:126.30px;font-size:14.54px;color:#3a3a3a;font-weight:normal;transform:scaleX(1.0338);">.00</div>
<div class="t g" style="left:1008.66px;top:114.10px;font-size:14.54px;color:#3a3a3a;font-weight:normal;transform:scaleX(1.0229);">.00</div>
<div class="t g" style="left:1015.50px;top:126.30px;font-size:14.54px;color:#3a3a3a;font-weight:normal;transform:scaleX(1.1465);">.0</div>
<div style="position:absolute;left:577px;top:346px;width:737px;height:380px;background:#f0f0f0;border:1px solid #9a9a9a;box-sizing:border-box;box-shadow:0 3px 14px rgba(0,0,0,0.28)"></div><div style="position:absolute;left:578px;top:347px;width:735px;height:44px;background:#fff"></div><div style="position:absolute;left:590px;top:404px;width:87px;height:1px;background:#d9d9d9"></div><div style="position:absolute;left:588px;top:435px;width:713px;height:228px;background:#fff;border:1px solid #d9d9d9;box-sizing:border-box"></div><div style="position:absolute;left:676px;top:402px;width:94px;height:34px;background:#fff;border:1px solid #d9d9d9;border-bottom:none;box-sizing:border-box"></div><div style="position:absolute;left:709px;top:451px;width:313px;height:32px;background:#fff;border:1px solid #a6a6a6;box-sizing:border-box"></div><div style="position:absolute;left:994px;top:453px;width:26px;height:28px;background:#e6e6e6;border:1px solid #c4c4c4;box-sizing:border-box"></div><div style="position:absolute;left:709px;top:488px;width:313px;height:32px;background:#fff;border:1px solid #a6a6a6;box-sizing:border-box"></div><div style="position:absolute;left:1037px;top:451px;width:127px;height:32px;background:#fff;border:1px solid #111;box-sizing:border-box"></div><div style="position:absolute;left:1037px;top:488px;width:127px;height:32px;background:#fff;border:1px solid #111;box-sizing:border-box"></div><div style="position:absolute;left:672px;top:536px;width:134px;height:34px;background:#fff;border:1px solid #a6a6a6;box-sizing:border-box"></div><div style="position:absolute;left:778px;top:538px;width:26px;height:30px;background:#e6e6e6;border:1px solid #c4c4c4;box-sizing:border-box"></div><div style="position:absolute;left:672px;top:575px;width:134px;height:34px;background:#fff;border:1px solid #a6a6a6;box-sizing:border-box"></div><div style="position:absolute;left:778px;top:577px;width:26px;height:30px;background:#e6e6e6;border:1px solid #c4c4c4;box-sizing:border-box"></div><div style="position:absolute;left:672px;top:614px;width:134px;height:34px;background:#fff;border:1px solid #a6a6a6;box-sizing:border-box"></div><div style="position:absolute;left:778px;top:616px;width:26px;height:30px;background:#e6e6e6;border:1px solid #c4c4c4;box-sizing:border-box"></div><div style="position:absolute;left:1179px;top:452px;width:108px;height:30px;background:#e1e1e1;border:1px solid #adadad;box-sizing:border-box"></div><div style="position:absolute;left:1179px;top:489px;width:108px;height:30px;background:#e1e1e1;border:1px solid #adadad;box-sizing:border-box"></div><div style="position:absolute;left:1163px;top:611px;width:124px;height:35px;background:#e1e1e1;border:1px solid #adadad;box-sizing:border-box"></div><div style="position:absolute;left:588px;top:677px;width:124px;height:36px;background:#e1e1e1;border:2px solid #0078d7;box-sizing:border-box"></div><div style="position:absolute;left:728px;top:677px;width:124px;height:36px;background:#e1e1e1;border:1px solid #adadad;box-sizing:border-box"></div><div style="position:absolute;left:883px;top:677px;width:124px;height:36px;background:#e1e1e1;border:1px solid #adadad;box-sizing:border-box"></div><div style="position:absolute;left:1023px;top:677px;width:124px;height:36px;background:#e1e1e1;border:1px solid #adadad;box-sizing:border-box"></div><div style="position:absolute;left:1178px;top:677px;width:124px;height:36px;background:#e1e1e1;border:1px solid #adadad;box-sizing:border-box"></div>
<svg class="L" viewBox="0 0 1323 746"><path d="M1271 361.2 L1286 376.2 M1286 361.2 L1271 376.2" stroke="#6a6a6a" stroke-width="1.05"/><path d="M1001.4 463.75 L1006.4 469.25 L1011.4 463.75" stroke="#555" stroke-width="1.1" fill="none"/><path d="M785.5 550.45 L790.5 555.95 L795.5 550.45" stroke="#555" stroke-width="1.1" fill="none"/><path d="M785.5 589.45 L790.5 594.95 L795.5 589.45" stroke="#555" stroke-width="1.1" fill="none"/><path d="M785.5 628.45 L790.5 633.95 L795.5 628.45" stroke="#555" stroke-width="1.1" fill="none"/><path d="M1277 466 L1282 466 L1279.5 469 Z" fill="#000"/><path d="M1277 503 L1282 503 L1279.5 506 Z" fill="#000"/></svg>
<div class="t" style="left:588.12px;top:359.80px;font-size:19.04px;color:#8c8c8c;font-weight:normal;transform:scaleX(0.9059);">Find and Replace</div>
<div class="t" style="left:618.11px;top:413.00px;font-size:16.13px;color:#000;font-weight:normal;">Fin<u>d</u></div>
<div class="t" style="left:695.82px;top:413.00px;font-size:17.01px;color:#000;font-weight:normal;transform:scaleX(0.8687);">Re<u>p</u>lace</div>
<div class="t" style="left:602.23px;top:460.00px;font-size:15.55px;color:#000;font-weight:normal;transform:scaleX(1.0184);">Fi<u>n</u>d what:</div>
<div class="t" style="left:602.26px;top:496.80px;font-size:15.26px;color:#000;font-weight:normal;transform:scaleX(1.0164);">R<u>e</u>place with:</div>
<div class="t" style="left:1048.55px;top:460.50px;font-size:14.68px;color:#000;font-weight:normal;transform:scaleX(1.0625);">No Format Set</div>
<div class="t" style="left:1202.59px;top:460.00px;font-size:15.55px;color:#000;font-weight:normal;transform:scaleX(0.9749);">For<u>m</u>at...</div>
<div class="t" style="left:1202.59px;top:497.00px;font-size:15.7px;color:#000;font-weight:normal;transform:scaleX(0.9656);">For<u>m</u>at...</div>
<div class="t" style="left:603.10px;top:546.20px;font-size:15.55px;color:#000;font-weight:normal;transform:scaleX(1.0659);">Wit<u>h</u>in:</div>
<div class="t" style="left:602.50px;top:585.80px;font-size:14.97px;color:#000;font-weight:normal;transform:scaleX(1.0085);"><u>S</u>earch:</div>
<div class="t" style="left:601.81px;top:624.00px;font-size:15.55px;color:#000;font-weight:normal;transform:scaleX(1.0395);"><u>L</u>ook in:</div>
<div class="t" style="left:676.70px;top:546.20px;font-size:15.55px;color:#000;font-weight:normal;transform:scaleX(0.9588);">Sheet</div>
<div class="t" style="left:676.09px;top:585.80px;font-size:14.97px;color:#000;font-weight:normal;transform:scaleX(1.0119);">By Rows</div>
<div class="t" style="left:676.04px;top:624.00px;font-size:15.55px;color:#000;font-weight:normal;transform:scaleX(1.0096);">Formulas</div>
<div class="t" style="left:1183.74px;top:621.30px;font-size:16.42px;color:#000;font-weight:normal;transform:scaleX(1.0057);">Op<u>t</u>ions &lt;&lt;</div>
<div class="t" style="left:611.69px;top:687.00px;font-size:16.42px;color:#000;font-weight:normal;transform:scaleX(0.9205);">Replace <u>A</u>ll</div>
<div class="t" style="left:761.99px;top:687.00px;font-size:16.42px;color:#000;font-weight:normal;transform:scaleX(0.9222);"><u>R</u>eplace</div>
<div class="t" style="left:918.43px;top:687.00px;font-size:16.42px;color:#000;font-weight:normal;transform:scaleX(0.9653);">F<u>i</u>nd All</div>
<div class="t" style="left:1050.95px;top:687.00px;font-size:16.42px;color:#000;font-weight:normal;transform:scaleX(0.9480);"><u>F</u>ind Next</div>
<div class="t" style="left:1220.24px;top:687.00px;font-size:16.42px;color:#000;font-weight:normal;transform:scaleX(0.9294);">Close</div>
<div class="t" style="left:1203.97px;top:357.70px;font-size:21.66px;color:#8a8a8a;font-weight:normal;transform:scaleX(0.7310);">?</div>
<div style="position:absolute;left:813px;top:475px;width:349px;height:177px;background:#f0f0f0;border:1px solid #6f6f6f;box-sizing:border-box;box-shadow:2px 4px 14px rgba(0,0,0,0.3)"></div><div style="position:absolute;left:814px;top:476px;width:347px;height:44px;background:#fff"></div><div style="position:absolute;left:941px;top:605px;width:93px;height:35px;background:#e1e1e1;border:2px solid #0078d7;box-sizing:border-box"></div>
<svg class="L" viewBox="0 0 1323 746"><path d="M1129 490 L1144.5 505.5 M1144.5 490 L1129 505.5" stroke="#111" stroke-width="1.3"/><circle cx="853.9" cy="565.1" r="21.8" fill="#0a6ecb"/><rect x="851.3" y="559.5" width="4.6" height="19" fill="#fff"/><rect x="851.3" y="551.8" width="4.6" height="4.4" fill="#fff"/></svg>
<div class="t" style="left:824.28px;top:489.00px;font-size:19.19px;color:#000;font-weight:normal;transform:scaleX(0.9249);">Microsoft Excel</div>
<div class="t" style="left:895.00px;top:557.20px;font-size:17.73px;color:#000;font-weight:normal;transform:scaleX(0.8717);">All done. We made 43 replacements.</div>
<div class="t" style="left:976.61px;top:614.80px;font-size:18.6px;color:#000;font-weight:normal;transform:scaleX(0.7885);">OK</div>
</body></html>
